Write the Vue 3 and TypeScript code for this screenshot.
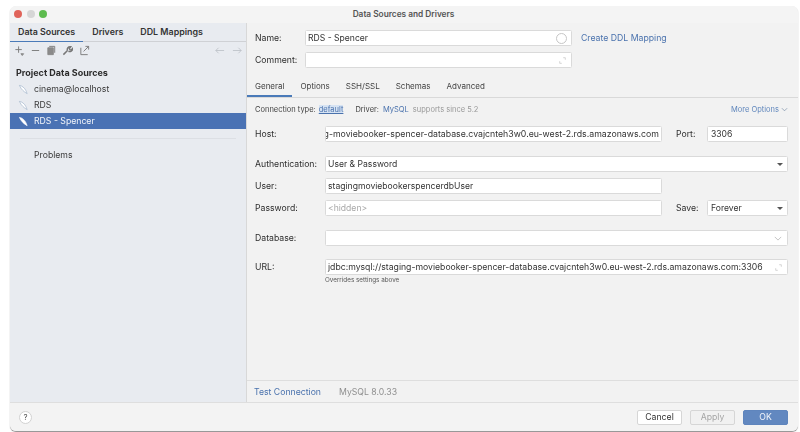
<script setup lang="ts">
const sources = [
  { name: 'cinema@localhost', selected: false },
  { name: 'RDS', selected: false },
  { name: 'RDS - Spencer', selected: true },
]
const leftTabs = ['Data Sources', 'Drivers', 'DDL Mappings']
const rightTabs = ['General', 'Options', 'SSH/SSL', 'Schemas', 'Advanced']
</script>

<template>
  <div class="page">
    <div class="window">
      <header class="titlebar">
        <div class="lights">
          <span class="light red"></span><span class="light grey"></span><span class="light green"></span>
        </div>
        <div class="title">Data Sources and Drivers</div>
      </header>
      <div class="main">
        <aside class="left">
          <nav class="ltabs">
            <span v-for="(t, i) in leftTabs" :key="t" class="ltab" :class="{ on: i === 0 }">{{ t }}</span>
          </nav>
          <div class="tools">
            <svg class="ic" viewBox="0 0 12 12"><path d="M5 1.500v7M1.500 5h7" /><path class="fill" d="M7.500 9.500h3L9 11.500z" /></svg>
            <svg class="ic" viewBox="0 0 12 12"><path d="M2 6h8" /></svg>
            <svg class="ic" viewBox="0 0 12 12"><path d="M3.500 1.500h6v7" /><path class="fill" d="M2 3h6v7.500H2z" /></svg>
            <svg class="ic" viewBox="0 0 12 12"><path class="wrench" d="M1.500 10.500 6 6M6 6c-.8-2 .8-4.500 3.500-4L8 3.700l.6 1.400 1.500.300 1.400-1.500C11.800 6.500 9 7.500 7 6.800" /></svg>
            <svg class="ic" viewBox="0 0 12 12"><path d="M2 3v7.500h7.500M5 7l5.500-5.500M7 1.500h3.500V5" /></svg>
            <span class="grow"></span>
            <svg class="ic faint" viewBox="0 0 12 12"><path d="M11 6H2M5 3 2 6l3 3" /></svg>
            <svg class="ic faint" viewBox="0 0 12 12"><path d="M1 6h9M7 3l3 3-3 3" /></svg>
          </div>
          <div class="group">Project Data Sources</div>
          <div v-for="s in sources" :key="s.name" class="src" :class="{ sel: s.selected }">
            <svg class="dolphin" viewBox="0 0 12 12"><path d="M1.500 1.500c3 .5 5.500 2.500 7 5.500l1.500 3.500C7 9 3.500 6 1.500 1.500z" /></svg>
            <span>{{ s.name }}</span>
          </div>
          <div class="sep"></div>
          <div class="problems">Problems</div>
        </aside>
        <section class="right">
          <div class="top">
            <div class="row name-row">
              <label class="top-lab">Name:</label>
              <div class="input name-input">
                <span class="grow">RDS - Spencer</span>
                <span class="circle"></span>
              </div>
              <a class="link ddl">Create DDL Mapping</a>
            </div>
            <div class="row comment-row">
              <label class="top-lab">Comment:</label>
              <div class="input name-input">
                <span class="grow"></span>
                <svg class="expand" viewBox="0 0 10 10"><path d="M1 9h3M1 9V6M9 1H6M9 1v3" /></svg>
              </div>
            </div>
          </div>
          <nav class="rtabs">
            <span v-for="(t, i) in rightTabs" :key="t" class="rtab" :class="{ on: i === 0 }">{{ t }}</span>
          </nav>
          <div class="info">
            <span>Connection type:</span>
            <a class="def">default</a>
            <span class="driver">Driver:</span>
            <a class="link mysql">MySQL</a>
            <span class="muted">supports since 5.2</span>
            <span class="grow"></span>
            <a class="link more">More Options</a>
            <svg class="more-chev" viewBox="0 0 8 8"><path d="M1 2.500 4 5.500l3-3" /></svg>
          </div>
          <div class="form">
            <div class="row host">
              <label class="lab">Host:</label>
              <div class="input wide clip"><span class="clipped">staging-moviebooker-spencer-database.cvajcnteh3w0.eu-west-2.rds.amazonaws.com</span></div>
              <label class="side port-lab">Port:</label>
              <div class="input side-input">3306</div>
            </div>
            <div class="row auth">
              <label class="lab">Authentication:</label>
              <div class="input fill-input select"><span class="grow">User &amp; Password</span><i class="tri"></i></div>
            </div>
            <div class="row user">
              <label class="lab">User:</label>
              <div class="input wide">stagingmoviebookerspencerdbUser</div>
            </div>
            <div class="row pass">
              <label class="lab">Password:</label>
              <div class="input wide hint">&lt;hidden&gt;</div>
              <label class="side save-lab">Save:</label>
              <div class="input side-input select"><span class="grow">Forever</span><i class="tri"></i></div>
            </div>
            <div class="row db">
              <label class="lab">Database:</label>
              <div class="input fill-input">
                <span class="grow"></span>
                <svg class="chev" viewBox="0 0 10 6"><path d="M1 1l4 4 4-4" /></svg>
              </div>
            </div>
            <div class="row url">
              <label class="lab">URL:</label>
              <div class="input fill-input url-input">
                <span class="grow">jdbc:mysql://staging-moviebooker-spencer-database.cvajcnteh3w0.eu-west-2.rds.amazonaws.com:3306</span>
                <svg class="expand" viewBox="0 0 10 10"><path d="M1 9h3M1 9V6M9 1H6M9 1v3" /></svg>
              </div>
            </div>
            <div class="note">Overrides settings above</div>
          </div>
          <div class="status">
            <a class="link test">Test Connection</a>
            <span class="version">MySQL 8.0.33</span>
          </div>
        </section>
      </div>
      <footer class="footer">
        <span class="help">?</span>
        <span class="grow"></span>
        <button class="btn">Cancel</button>
        <button class="btn off">Apply</button>
        <button class="btn ok">OK</button>
      </footer>
    </div>
  </div>
</template>

<style>
html, body { margin: 0; background: #fff; }
</style>

<style scoped>
.page {
  width: 800px;
  height: 432px;
  box-sizing: border-box;
  padding: 6px 2px 1px 10px;
  overflow: hidden;
  font-family: Inter, "Liberation Sans", sans-serif;
  color: #2e2e2e;
  font-size: 8.700px;
  background: #fff;
}
.window {
  height: 100%;
  display: flex;
  flex-direction: column;
  background: #f2f2f2;
  border-radius: 6px;
  overflow: hidden;
  box-shadow: 0 1px 1px #8d8d8d;
  filter: blur(0.45px);
}
.titlebar { height: 17px; box-sizing: border-box; padding-bottom: 1px; flex: none; display: flex; align-items: center; background: #f4f4f4; }
.lights { display: flex; gap: 4.500px; padding-left: 4px; }
.light { width: 8px; height: 8px; border-radius: 50%; }
.red { background: #e0645a; }
.grey { background: #d6d6d6; }
.green { background: #5dbb4f; }
.title { flex: 1; text-align: center; font-size: 8.300px; font-weight: 600; color: #555; padding-right: 38px; }
.main { flex: 1; min-height: 0; display: flex; }
.left { width: 236px; flex: none; background: #e8ebf0; border-right: 1px solid #d8d8d8; }
.ltabs { height: 18px; display: flex; padding-left: 8px; gap: 17px; align-items: center; border-bottom: 1px solid #cfd1d5; }
.ltab { font-size: 8.900px; font-weight: 600; color: #333; line-height: 18px; height: 18px; }
.ltab.on { box-shadow: 0 1px 0 #4a7ab8; margin-left: -8px; padding: 0 8px; margin-right: -8px; }
.tools { height: 16px; display: flex; align-items: center; gap: 5.300px; padding: 0 3.500px 0 3.500px; }
.ic { width: 11px; height: 11px; fill: none; stroke: #777; stroke-width: 1; flex: none; }
.ic .fill { fill: #8a8a8a; stroke: #8a8a8a; }
.ic .wrench { stroke-width: 1.600; }
.ic.faint { stroke: #c0c4ca; margin-left: 1.700px; }
.grow { flex: 1; min-width: 0; }
.group { font-size: 9px; font-weight: 700; color: #2c2c2c; margin: 8px 0 2px 6px; line-height: 13px; height: 13px; }
.src { height: 16px; display: flex; align-items: center; color: #3a3a3a; padding-left: 8px; gap: 5px; }
.dolphin { width: 11px; height: 11px; fill: #fff; stroke: #9db0c8; stroke-width: .7; flex: none; }
.src.sel { background: #4a72b4; color: #f2f5fa; }
.sel .dolphin { fill: #fff; stroke: #fff; }
.sep { height: 1px; background: #dcdfe4; margin: 9px 10px 0; }
.problems { margin: 10px 0 0 24px; line-height: 13px; color: #3a3a3a; }
.right { flex: 1; min-width: 0; display: flex; flex-direction: column; }
.top { height: 52px; flex: none; padding: 7px 10px 0 8px; box-sizing: border-box; }
.row { display: flex; align-items: center; }
.input {
  box-sizing: border-box;
  background: #fff;
  border: 1px solid #dadada;
  border-radius: 1.500px;
  height: 16px;
  display: flex;
  align-items: center;
  padding: 0 2px;
  font-size: 8.600px;
  color: #333;
  white-space: nowrap;
  min-width: 0;
}
.top-lab { width: 50px; flex: none; }
.name-input { width: 267px; flex: none; }
.comment-row { margin-top: 6px; }
.circle { width: 9px; height: 9px; border: 1px solid #c6c6c6; border-radius: 50%; margin-right: 2px; }
.expand { width: 7px; height: 7px; fill: none; stroke: #b5b5b5; stroke-width: .8; margin-right: 3px; flex: none; }
.link { color: #4a72ad; }
.ddl { margin-left: 9px; }
.rtabs { height: 18px; flex: none; display: flex; border-bottom: 1px solid #d9d9d9; margin-top: 4px; }
.rtab { padding: 0 8px; line-height: 15.500px; height: 18px; font-size: 8px; color: #444; box-sizing: border-box; }
.rtab.on { box-shadow: inset 0 -2px 0 #4a7ab8; }
.info { height: 12px; flex: none; display: flex; align-items: center; font-size: 7.500px; color: #444; padding: 5px 10px 0 8px; }
.def { color: #4a72ad; text-decoration: underline; background: #d6e3f3; margin-left: 3px; }
.driver { margin-left: 12px; }
.mysql { margin-left: 4px; }
.muted { color: #999; margin-left: 4px; }
.more { color: #5f86bc; }
.more-chev { width: 7px; height: 7px; margin-left: 2px; fill: none; stroke: #7a8ea8; stroke-width: .8; }
.form { flex: 1; padding: 11px 10px 0 8px; min-height: 0; }
.lab { width: 70px; flex: none; }
.wide { width: 337px; flex: none; }
.fill-input { flex: 1; }
.url-input { font-size: 8.680px; }
.clip { overflow: hidden; justify-content: flex-end; padding-right: 2px; font-size: 8.750px; }
.clipped { flex: none; }
.side { flex: none; }
.port-lab { margin-left: 14px; width: 31px; }
.save-lab { margin-left: 14px; width: 31px; }
.side-input { width: 81px; flex: none; padding-left: 3px; }
.tri { width: 0; height: 0; border: 3px solid transparent; border-top: 3.500px solid #555; border-bottom: 0; margin-right: 2px; }
.hint { color: #a8a8a8; }
.auth { margin-top: 14px; }
.user { margin-top: 6px; }
.pass { margin-top: 6px; }
.db { margin-top: 14px; }
.url { margin-top: 13px; }
.chev { width: 8px; height: 5px; fill: none; stroke: #b0b0b0; stroke-width: .9; margin-right: 3px; flex: none; }
.note { margin: 1px 0 0 70px; font-size: 6.300px; color: #555; line-height: 9px; }
.status { height: 21px; flex: none; border-top: 1px solid #dedede; display: flex; align-items: center; padding-left: 7px; gap: 18px; }
.version { color: #8f8f8f; }
.footer { height: 29px; flex: none; border-top: 1px solid #dedede; box-sizing: border-box; display: flex; align-items: center; padding: 0 10px 0 9px; gap: 8px; background: #f3f3f3; }
.help { width: 13px; height: 13px; box-sizing: border-box; border-radius: 50%; background: #fff; border: 1px solid #d2d2d2; font-size: 8px; text-align: center; line-height: 11px; color: #555; }
.btn {
  width: 45px; height: 15px; padding: 0;
  font: inherit; font-size: 8.700px; color: #333;
  background: #fff; border: 1px solid #d6d6d6; border-radius: 2px;
}
.btn.off { background: #f1f1f1; color: #a5a5a5; }
.btn.ok { background: #6288c0; color: #f2f5fa; border-color: #5f85bd; }
</style>
